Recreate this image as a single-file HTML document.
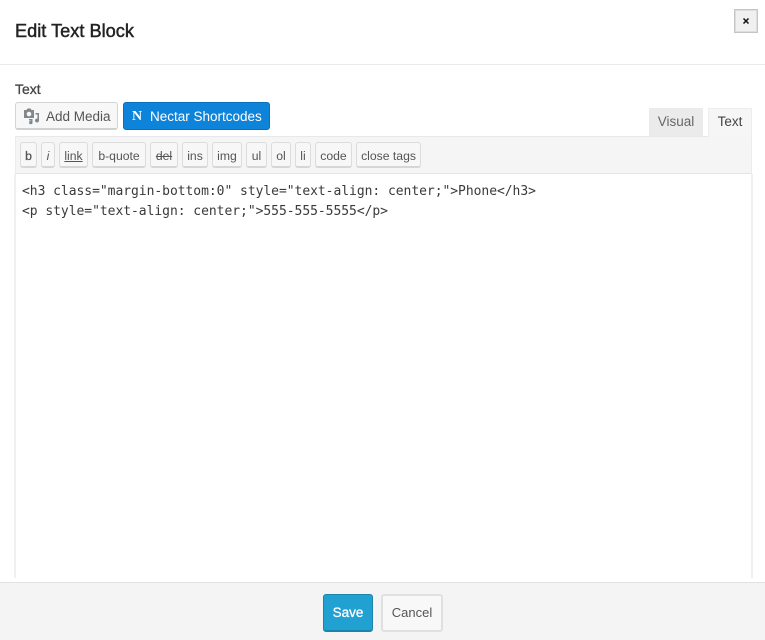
<!DOCTYPE html>
<html><head><meta charset="utf-8"><style>
html,body{margin:0;padding:0;background:#fff}
body{width:765px;height:640px;position:relative;overflow:hidden;font-family:"Liberation Sans",sans-serif;color:#444}
.a{position:absolute;box-sizing:border-box}
.t{position:absolute;white-space:nowrap}
.q{position:absolute;box-sizing:border-box;top:142px;height:26px;border:1px solid #dcdcdc;border-bottom:2px solid #d6d6d6;border-radius:3px;background:#f7f7f7;color:#555;font-size:12.200px;line-height:27px;text-align:center;white-space:nowrap}
.m{font-family:"DejaVu Sans Mono",monospace;font-size:13px;letter-spacing:-.04px;color:#3a3a3a;white-space:pre;line-height:20px}
</style></head><body>
<div class="t" style="left:15px;top:20px;font-size:18.200px;line-height:22px;color:#222;-webkit-text-stroke:.45px #222">Edit Text Block</div>
<div class="a" style="left:734px;top:9px;width:24px;height:24px;border:1px solid #c4c4c4;box-shadow:inset 0 0 0 1px #dedede;background:#f0f0f0"></div>
<svg class="a" style="left:742px;top:17px" width="8" height="8" viewBox="0 0 8 8"><path d="M1.500 1.500L6.500 6.500M6.500 1.500L1.500 6.500" stroke="#111" stroke-width="1.500"/></svg>
<div class="a" style="left:0;top:64px;width:765px;height:1px;background:#eaeaea"></div>

<div class="t" style="left:15px;top:81px;font-size:14px;color:#444;line-height:16px;-webkit-text-stroke:.3px #444">Text</div>

<div class="a" style="left:15px;top:102px;width:103px;height:28px;border:1px solid #d4d4d4;border-bottom:2px solid #d0d0d0;border-radius:3px;background:#f7f7f7"></div>
<svg class="a" style="left:23px;top:108px" width="17" height="17" viewBox="0 0 17 17"><path d="M1 2h2.500l1-1.500h3l1 1.500h2.500v8h-10z" fill="#82878c"/><circle cx="6" cy="6" r="2.300" fill="#f7f7f7"/><path d="M12.500 5h3.500v7.500a2 2 0 1 1-1.500-1.900V6.500h-2zM6 11h3.500v3.500a1.700 1.700 0 1 1-1.500-1.600V12.500H6z" fill="#82878c"/></svg>
<div class="t" style="left:46px;top:108px;font-size:13.500px;line-height:17px;color:#555">Add Media</div>

<div class="a" style="left:123px;top:102px;width:147px;height:28px;border:1px solid #0b72b8;border-radius:3px;background:#0d83da"></div>
<div class="t" style="left:132px;top:108px;font:bold 14px/17px 'Liberation Serif',serif;color:#fff">N</div>
<div class="t" style="left:150px;top:108px;font-size:13.500px;line-height:17px;color:#fff">Nectar Shortcodes</div>

<div class="a" style="left:649px;top:108px;width:54px;height:29px;background:#ebebeb;color:#666;font-size:13.500px;line-height:27px;text-align:center">Visual</div>
<div class="a" style="left:708px;top:108px;width:44px;height:29px;background:#f6f6f6;border:1px solid #ececec;border-bottom:0;color:#444;font-size:13.500px;line-height:26px;text-align:center">Text</div>

<div class="a" style="left:15px;top:136px;width:693px;height:1px;background:#e8e8e8"></div>
<div class="a" style="left:15px;top:137px;width:737px;height:37px;background:#f5f5f5;border-left:1px solid #ececec;border-right:1px solid #ececec;border-bottom:1px solid #e5e5e5"></div>

<div class="q" style="left:20px;width:17px;-webkit-text-stroke:.3px #555">b</div>
<div class="q" style="left:41px;width:14px;font-style:italic">i</div>
<div class="q" style="left:59px;width:29px;text-decoration:underline">link</div>
<div class="q" style="left:92px;width:54px">b-quote</div>
<div class="q" style="left:150px;width:28px;text-decoration:line-through">del</div>
<div class="q" style="left:182px;width:26px">ins</div>
<div class="q" style="left:212px;width:30px">img</div>
<div class="q" style="left:246px;width:21px">ul</div>
<div class="q" style="left:271px;width:20px">ol</div>
<div class="q" style="left:295px;width:16px">li</div>
<div class="q" style="left:315px;width:37px">code</div>
<div class="q" style="left:356px;width:65px">close tags</div>

<div class="a" style="left:14px;top:174px;width:2px;height:404px;background:#f0f0f0"></div>
<div class="a" style="left:751px;top:174px;width:2px;height:404px;background:#f0f0f0"></div>

<div class="t m" style="left:22px;top:182px">&lt;h3 class="margin-bottom:0" style="text-align: center;"&gt;Phone&lt;/h3&gt;</div>
<div class="t m" style="left:22px;top:202px">&lt;p style="text-align: center;"&gt;555-555-5555&lt;/p&gt;</div>

<div class="a" style="left:0;top:582px;width:765px;height:58px;background:#f4f4f4;border-top:1px solid #e2e2e2"></div>
<div class="a" style="left:323px;top:594px;width:50px;height:38px;border:1px solid #1a84ac;border-bottom-width:2px;border-radius:3px;background:#21a0d2;color:#fff;font-size:13.500px;-webkit-text-stroke:.3px #fff;line-height:35px;text-align:center">Save</div>
<div class="a" style="left:381px;top:594px;width:62px;height:38px;border:2px solid #e0e0e0;border-radius:3px;background:#f8f8f8;color:#555;font-size:13px;line-height:34px;text-align:center">Cancel</div>
</body></html>
